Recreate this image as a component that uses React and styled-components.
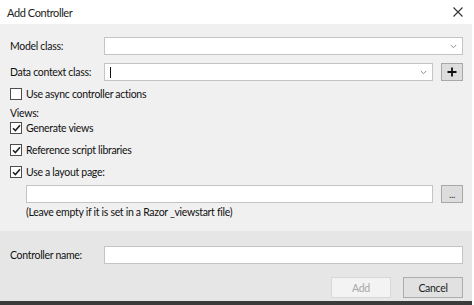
import React from "react";
import styled, { createGlobalStyle } from "styled-components";

const Global = createGlobalStyle`
	html, body {
		margin: 0;
		padding: 0;
		background: #ffffff;
	}
	body {
		font-family: Lato, "Noto Sans", sans-serif;
		font-size: 10.5px;
		letter-spacing: -0.3px;
		color: #111;
	}
`;

const Dialog = styled.div`
	width: 472px;
	height: 305px;
	display: flex;
	flex-direction: column;
	background: #ffffff;
	& > * {
		flex-shrink: 0;
	}
`;

const TitleBar = styled.div`
	height: 24px;
	display: flex;
	align-items: center;
	padding: 0 7px;
	background: #ffffff;
	font-size: 11px;
	letter-spacing: -0.4px;
	color: #222;
`;

const Close = styled.div`
	margin-left: auto;
	margin-right: 2px;
	display: flex;
`;

const Body = styled.div`
	background: #f0f0f0;
	padding: 13px 9px 0 10px;
	height: 207px;
	box-sizing: border-box;
	display: flex;
	flex-direction: column;
	& > * {
		flex-shrink: 0;
	}
`;

const Footer = styled.div`
	background: #e6e6e6;
	height: 70px;
	box-sizing: border-box;
	padding: 15px 9px 0 10px;
	display: flex;
	flex-direction: column;
`;

const BottomEdge = styled.div`
	height: 4px;
	background: #3b3b3b;
`;

const FieldRow = styled.div`
	display: flex;
	align-items: center;
	height: 18px;
	margin-bottom: ${(p) => p.gap || 0}px;
`;

const Label = styled.div`
	width: 94px;
	flex-shrink: 0;
	white-space: nowrap;
`;

const Input = styled.div`
	flex: 1;
	height: 18px;
	box-sizing: border-box;
	background: #ffffff;
	border: 1px solid #c4c4c4;
	display: flex;
	align-items: center;
	padding: 0 5px;
	margin-right: ${(p) => (p.spaced ? 8 : 0)}px;
`;

const Caret = styled.div`
	width: 1px;
	height: 11px;
	background: #111;
`;

const Chevron = styled.svg`
	margin-left: auto;
`;

const SmallButton = styled.div`
	width: 22px;
	height: 18px;
	box-sizing: border-box;
	background: #dddddd;
	border: 1px solid #a8a8a8;
	display: flex;
	align-items: center;
	justify-content: center;
	font-size: 10px;
	color: #333;
`;

const CheckRow = styled.label`
	display: flex;
	align-items: center;
	height: 22px;
	gap: 4px;
	white-space: nowrap;
`;

const Box = styled.div`
	width: 12px;
	height: 12px;
	box-sizing: border-box;
	background: #ffffff;
	border: 1px solid #4d4d4d;
	display: flex;
	align-items: center;
	justify-content: center;
`;

const Text = styled.div`
	height: ${(p) => p.h || 22}px;
	box-sizing: border-box;
	padding-top: ${(p) => p.top || 0}px;
	display: flex;
	align-items: center;
	padding-left: ${(p) => p.indent || 0}px;
	white-space: nowrap;
`;

const Indented = styled.div`
	display: flex;
	align-items: center;
	padding-left: 16px;
	height: 18px;
	margin-top: 2px;
`;

const Buttons = styled.div`
	display: flex;
	justify-content: flex-end;
	gap: 12px;
	margin-top: 13px;
`;

const Button = styled.div`
	width: 60px;
	height: 21px;
	box-sizing: border-box;
	display: flex;
	align-items: center;
	justify-content: center;
	background: ${(p) => (p.disabled ? "#f3f3f3" : "#e1e1e1")};
	border: 1px solid ${(p) => (p.disabled ? "#d8d8d8" : "#adadad")};
	color: ${(p) => (p.disabled ? "#a6a6a6" : "#1e1e1e")};
`;

const Check = ({ checked, children }) => (
	<CheckRow>
		<Box>
			{checked && (
				<svg width="9" height="8" viewBox="0 0 9 8">
					<path d="M1 4.2 L3.4 6.6 L8 1.2" fill="none" stroke="#222" strokeWidth="1.6" />
				</svg>
			)}
		</Box>
		{children}
	</CheckRow>
);

const Down = () => (
	<Chevron width="7" height="5" viewBox="0 0 7 5">
		<path d="M0.8 1 L3.5 3.7 L6.2 1" fill="none" stroke="#8a8a8a" strokeWidth="1" />
	</Chevron>
);

const App = () => {
	return (
		<>
			<Global />
			<Dialog>
				<TitleBar>
					Add Controller
					<Close>
						<svg width="10" height="10" viewBox="0 0 10 10">
							<path d="M0.5 0.5 L9.5 9.5 M9.5 0.5 L0.5 9.5" stroke="#333" strokeWidth="1.1" />
						</svg>
					</Close>
				</TitleBar>
				<Body>
					<FieldRow gap={8}>
						<Label>Model class:</Label>
						<Input>
							<Down />
						</Input>
					</FieldRow>
					<FieldRow gap={2}>
						<Label>Data context class:</Label>
						<Input spaced>
							<Caret />
							<Down />
						</Input>
						<SmallButton>
							<svg width="10" height="10" viewBox="0 0 10 10">
								<path d="M5 0.5 V9.5 M0.5 5 H9.5" stroke="#111" strokeWidth="1.8" />
							</svg>
						</SmallButton>
					</FieldRow>
					<Check>Use async controller actions</Check>
					<Text h={12} top={3}>Views:</Text>
					<Check checked>Generate views</Check>
					<Check checked>Reference script libraries</Check>
					<Check checked>Use a layout page:</Check>
					<Indented>
						<Input spaced />
						<SmallButton>...</SmallButton>
					</Indented>
					<Text h={18} indent={16}>(Leave empty if it is set in a Razor _viewstart file)</Text>
				</Body>
				<Footer>
					<FieldRow>
						<Label>Controller name:</Label>
						<Input />
					</FieldRow>
					<Buttons>
						<Button disabled>Add</Button>
						<Button>Cancel</Button>
					</Buttons>
				</Footer>
				<BottomEdge />
			</Dialog>
		</>
	);
};

export default App;
